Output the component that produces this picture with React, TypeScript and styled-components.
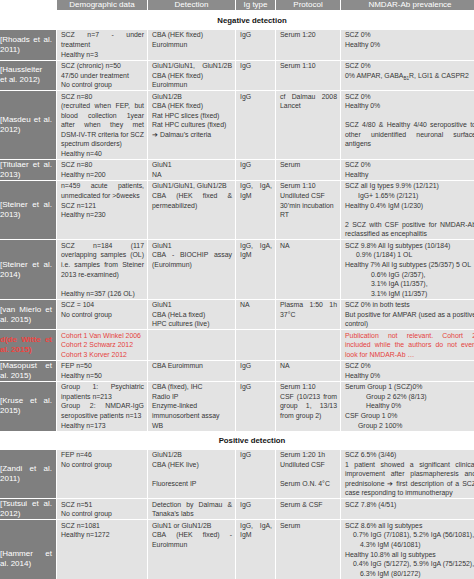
import React from "react";
import styled, { createGlobalStyle } from "styled-components";

const Global = createGlobalStyle`
  html, body { margin: 0; padding: 0; background: #fff; }
  body { width: 474px; height: 579px; overflow: hidden; font-family: "Liberation Sans", Arial, sans-serif; }
`;

const Page = styled.div`
  width: 474px;
  height: 579px;
  overflow: hidden;
  background: #fff;
`;

const Table = styled.div`
  display: grid;
  grid-template-columns: 56px 90px 87px 39px 64px 138px;
  column-gap: 1px;
  row-gap: 1px;
  width: 479px;
  background: #fff;
`;

const HeadCell = styled.div<{ $blank?: boolean }>`
  height: 10px;
  line-height: 10px;
  background: ${(p) => (p.$blank ? "#fff" : "#8c8c8c")};
  color: #fff;
  font-size: 8px;
  text-align: center;
  white-space: nowrap;
  overflow: hidden;
`;

const Section = styled.div<{ $h: number }>`
  grid-column: 1 / -1;
  height: ${(p) => p.$h}px;
  display: flex;
  align-items: center;
  justify-content: center;
  padding-left: 25px;
  font-weight: 700;
  font-size: 7.8px;
  color: #151515;
  background: #fff;
`;

const RefCell = styled.div<{ $red?: boolean }>`
  background: #7f7f7f;
  color: ${(p) => (p.$red ? "#f0443f" : "#fff")};
  font-weight: ${(p) => (p.$red ? 700 : 400)};
  font-size: 8px;
  line-height: 10px;
  display: flex;
  flex-direction: column;
  justify-content: center;
  padding: 0 4px 0 0;
  min-width: 0;
`;

const Cell = styled.div<{ $red?: boolean }>`
  background: #e3e3e3;
  color: ${(p) => (p.$red ? "#e5423d" : "#363636")};
  font-size: 6.9px;
  line-height: 9.6px;
  padding: 0.4px 3px 0.4px 4px;
  min-width: 0;
`;

const LineBox = styled.div<{ $j?: boolean; $i?: number }>`
  display: flex;
  justify-content: ${(p) => (p.$j ? "space-between" : "flex-start")};
  white-space: nowrap;
  min-height: 1lh;
  padding-left: ${(p) => p.$i ?? 0}px;
`;

const Sub = styled.sub`
  font-size: 4.6px;
  vertical-align: -1.5px;
  line-height: 0;
`;

type Spec = string | { t: React.ReactNode; j?: boolean; i?: number };
type Row = { ref: [string, string]; red?: boolean; redCells?: number[]; cols: Spec[][] };

const J = (t: string): Spec => ({ t, j: true });
const In = (i: number, t: React.ReactNode): Spec => ({ t, i });

function Line({ spec }: { spec: Spec }) {
  if (typeof spec === "string") return <LineBox><span>{spec || "\u00a0"}</span></LineBox>;
  if (spec.j && typeof spec.t === "string") {
    return (
      <LineBox $j $i={spec.i}>
        {spec.t.split(" ").map((w, k) => (
          <span key={k}>{w}</span>
        ))}
      </LineBox>
    );
  }
  return (
    <LineBox $i={spec.i}>
      <span>{spec.t}</span>
    </LineBox>
  );
}

const headers = ["Demographic data", "Detection", "Ig type", "Protocol", "NMDAR-Ab prevalence"];

const negRows: Row[] = [
  {
    ref: ["[Rhoads et al.", "2011)"],
    cols: [
      [J("SCZ n=7 - under"), "treatment", "Healthy n=3"],
      ["CBA (HEK fixed)", "Euroimmun"],
      ["IgG"],
      ["Serum 1:20"],
      ["SCZ 0%", "Healthy 0%"],
    ],
  },
  {
    ref: ["[Haussleiter", "et al. 2012)"],
    cols: [
      ["SCZ (chronic) n=50", "47/50 under treatment", "No control group"],
      [J("GluN1/GluN1, GluN1/2B"), "CBA (HEK fixed)", "Euroimmun"],
      ["IgG"],
      ["Serum 1:10"],
      [
        "SCZ 0%",
        {
          t: (
            <>
              0% AMPAR, GABA<Sub>B1</Sub>R, LGI1 &amp; CASPR2
            </>
          ),
        },
      ],
    ],
  },
  {
    ref: ["[Masdeu et al.", "2012)"],
    cols: [
      [
        "SCZ n=80",
        J("(recruited when FEP, but"),
        J("blood collection 1year"),
        J("after when they met"),
        J("DSM-IV-TR criteria for SCZ"),
        "spectrum disorders)",
        "Healthy n=40",
      ],
      ["GluN1/2B", "CBA (HEK fixed)", "Rat HPC slices (fixed)", "Rat HPC cultures (fixed)", "\u2794 Dalmau\u2019s criteria"],
      ["IgG"],
      [J("cf Dalmau 2008"), "Lancet"],
      [
        "SCZ 0%",
        "Healthy 0%",
        "",
        J("SCZ 4/80 & Healthy 4/40 seropositive to"),
        J("other unidentified neuronal surface"),
        "antigens",
      ],
    ],
  },
  {
    ref: ["[Titulaer et al.", "2013)"],
    cols: [["SCZ n=80", "Healthy n=200"], ["GluN1", "NA"], ["IgG"], ["Serum"], ["SCZ 0%", "Healthy"]],
  },
  {
    ref: ["[Steiner et al.", "2013)"],
    cols: [
      [J("n=459 acute patients,"), "unmedicated for >6weeks", "SCZ n=121", "Healthy n=230"],
      ["GluN1/GluN1, GluN1/2B", J("CBA (HEK fixed &"), "permeabilized)"],
      [J("IgG, IgA,"), "IgM"],
      ["Serum 1:10", "Undiluted CSF", "30\u2019min incubation", "RT"],
      [
        "SCZ  all Ig types 9.9% (12/121)",
        In(13, "IgG+ 1.65% (2/121)"),
        "Healthy 0.4% IgM (1/230)",
        "",
        J("2 SCZ with CSF positive for NMDAR-Ab"),
        "reclassified as encephalitis",
      ],
    ],
  },
  {
    ref: ["[Steiner et al.", "2014)"],
    cols: [
      [J("SCZ n=184 (117"), J("overlapping samples (OL)"), J("i.e. samples from Steiner"), "2013 re-examined)", "", "Healthy n=357 (126 OL)"],
      ["GluN1", J("CBA - BIOCHIP assay"), "(Euroimmun)"],
      [J("IgG, IgA,"), "IgM"],
      ["NA"],
      [
        "SCZ 9.8% All Ig subtypes (10/184)",
        In(11, "0.9% (1/184) 1 OL"),
        "Healthy 7% All Ig subtypes (25/357) 5 OL",
        In(26, "0.6% IgG (2/357),"),
        In(26, "3.1% IgA (11/357),"),
        In(26, "3.1% IgM (11/357)"),
      ],
    ],
  },
  {
    ref: ["[van Mierlo et", "al. 2015)"],
    cols: [
      ["SCZ = 104", "No control group"],
      ["GluN1", "CBA (HeLa fixed)", "HPC cultures (live)"],
      ["NA"],
      [J("Plasma 1:50 1h"), "37\u00b0C"],
      ["SCZ 0% in both tests", J("But positive for AMPAR (used as a positive"), "control)"],
    ],
  },
  {
    ref: ["d(de Witte et", "al. 2015)"],
    red: true,
    redCells: [0, 4],
    cols: [
      ["Cohort 1 Van Winkel 2006", "Cohort 2 Schwarz 2012", "Cohort 3 Korver 2012"],
      [],
      [],
      [],
      [J("Publication not relevant. Cohort 2"), J("included while the authors do not even"), "look for NMDAR-Ab \u2026"],
    ],
  },
  {
    ref: ["[Masopust et", "al. 2015)"],
    cols: [["FEP n=50", "Healthy n=50"], ["CBA Euroimmun"], ["IgG"], ["NA"], ["SCZ 0%", "Healthy 0%"]],
  },
  {
    ref: ["[Kruse et al.", "2015)"],
    cols: [
      [J("Group 1: Psychiatric"), "inpatients n=213", J("Group 2: NMDAR-IgG"), "seropositive patients n=13", "Healthy n=173"],
      ["CBA (fixed), IHC", "Radio IP", "Enzyme-linked", "immunosorbent assay", "WB"],
      ["IgG"],
      ["Serum 1:10", J("CSF (10/213 from"), J("group 1, 13/13"), "from group 2)"],
      [
        "Serum Group 1 (SCZ)0%",
        In(21, "Group 2 62% (8/13)"),
        In(21, "Healthy 0%"),
        "CSF Group 1 0%",
        In(13, "Group 2 100%"),
      ],
    ],
  },
];

const posRows: Row[] = [
  {
    ref: ["[Zandi et al.", "2011)"],
    cols: [
      ["FEP n=46", "No control group"],
      ["GluN1/2B", "CBA (HEK live)", "", "Fluorescent IP"],
      ["IgG"],
      ["Serum 1:20 1h", "Undiluted CSF", "", "Serum O.N. 4\u00b0C"],
      [
        "SCZ 6.5% (3/46)",
        J("1 patient showed a significant clinical"),
        J("improvement after plasmapheresis and"),
        J("prednisolone \u2794 first description of a SCZ"),
        "case responding to immunotherapy",
      ],
    ],
  },
  {
    ref: ["[Tsutsui et al.", "2012)"],
    cols: [
      ["SCZ n=51", "No control group"],
      [J("Detection by Dalmau &"), "Tanaka\u2019s labs"],
      ["IgG"],
      ["Serum & CSF"],
      ["SCZ 7.8% (4/51)"],
    ],
  },
  {
    ref: ["[Hammer et", "al. 2014)"],
    cols: [
      ["SCZ n=1081", "Healthy n=1272"],
      ["GluN1 or GluN1/2B", J("CBA (HEK fixed) -"), "Euroimmun"],
      [J("IgG, IgA,"), "IgM"],
      ["Serum"],
      [
        "SCZ 8.6% all Ig subtypes",
        In(8, "0.7% IgG (7/1081), 5.2% IgA (56/1081),"),
        In(15, "4.3% IgM (46/1081)"),
        "Healthy 10.8% all Ig subtypes",
        In(8, "0.4% IgG (5/1272), 5.9% IgA (75/1252),"),
        In(15, "6.3% IgM (80/1272)"),
        "",
        "",
      ],
    ],
  },
];

function renderRow(r: Row, idx: number) {
  return (
    <React.Fragment key={idx}>
      <RefCell $red={r.red}>
        <Line spec={J(r.ref[0])} />
        <Line spec={r.ref[1]} />
      </RefCell>
      {r.cols.map((c, k) => (
        <Cell key={k} $red={r.redCells?.includes(k)}>
          {c.map((s, m) => (
            <Line key={m} spec={s} />
          ))}
        </Cell>
      ))}
    </React.Fragment>
  );
}

export default function App() {
  return (
    <Page>
      <Global />
      <Table>
        <HeadCell $blank />
        {headers.map((h) => (
          <HeadCell key={h}>{h}</HeadCell>
        ))}
        <Section $h={18}>Negative detection</Section>
        {negRows.map(renderRow)}
        <Section $h={17}>Positive detection</Section>
        {posRows.map(renderRow)}
      </Table>
    </Page>
  );
}
